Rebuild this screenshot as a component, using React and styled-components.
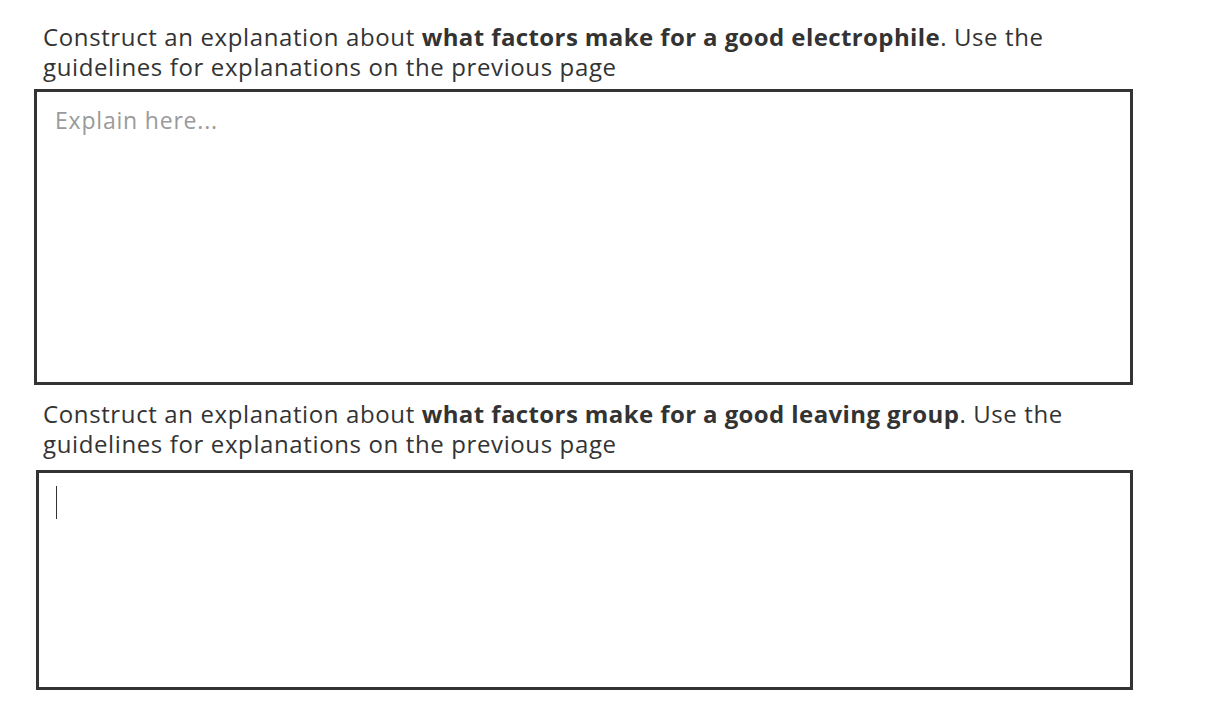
import React from "react";
import styled, { createGlobalStyle } from "styled-components";

const GlobalStyle = createGlobalStyle`
  body {
    margin: 0;
    background: #ffffff;
    font-family: "Open Sans", Lato, sans-serif;
    color: #333333;
  }
`;

const Page = styled.div`
  width: 1099px;
  padding: 22px 0 0 34px;
`;

const Prompt = styled.p`
  margin: ${props => props.$top}px 0 0;
  padding: 0 9px;
  font-size: 24px;
  line-height: 30px;
  letter-spacing: 0.62px;
  color: #333333;
  b {
    font-weight: 700;
    letter-spacing: 0.4px;
  }
`;

const AnswerBox = styled.div`
  position: relative;
  margin: ${props => props.$top}px 0 0 ${props => props.$inset}px;
`;

const Answer = styled.textarea`
  display: block;
  box-sizing: border-box;
  width: 100%;
  height: ${props => props.$height}px;
  margin: 0;
  padding: 13px 18px;
  border: 3px solid #333333;
  border-radius: 0;
  resize: none;
  outline: none;
  font-family: "Open Sans", Lato, sans-serif;
  font-size: 23px;
  line-height: 30px;
  letter-spacing: 0.8px;
  color: #333333;
  &::placeholder {
    color: #9a9a9a;
  }
`;

const Caret = styled.span`
  position: absolute;
  left: 20px;
  top: 16px;
  width: 1px;
  height: 33px;
  background: #333333;
  pointer-events: none;
`;

export default function App() {
  return (
    <>
      <GlobalStyle />
      <Page>
        <Prompt $top={0}>
          Construct an explanation about <b>what factors make for a good electrophile</b>. Use the
          guidelines for explanations on the previous page
        </Prompt>
        <AnswerBox $top={7} $inset={0}>
          <Answer $height={296} placeholder="Explain here..." />
        </AnswerBox>
        <Prompt $top={14}>
          Construct an explanation about <b>what factors make for a good leaving group</b>. Use the
          guidelines for explanations on the previous page
        </Prompt>
        <AnswerBox $top={11} $inset={2}>
          <Answer $height={220} />
          <Caret />
        </AnswerBox>
      </Page>
    </>
  );
}
